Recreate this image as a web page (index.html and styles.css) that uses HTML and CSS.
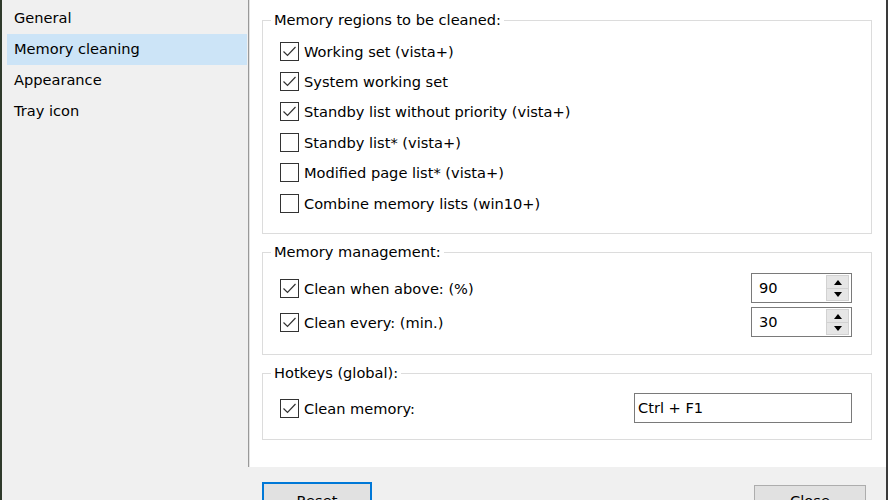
FILE: index.html
```html
<!DOCTYPE html>
<html lang="en">
<head>
  <meta charset="UTF-8" />
  <meta name="viewport" content="width=device-width, initial-scale=1.0"/>
  <title>Settings</title>
  <link rel="stylesheet" href="styles.css">
</head>
<body>
  <div class="screen">
    <div class="edge-left"></div>

    <div class="window">
      <div class="main">
        <ul class="nav">
          <li>General</li>
          <li class="active">Memory cleaning</li>
          <li>Appearance</li>
          <li>Tray icon</li>
        </ul>

        <div class="page">
          <fieldset class="group regions">
            <legend>Memory regions to be cleaned:</legend>
            <label class="check">
              <svg class="box" viewBox="0 0 19 19"><rect x="0.5" y="0.5" width="18" height="18"/><path d="M3.5 9.5l4 4 8-8.5"/></svg>
              Working set (vista+)
            </label>
            <label class="check">
              <svg class="box" viewBox="0 0 19 19"><rect x="0.5" y="0.5" width="18" height="18"/><path d="M3.5 9.5l4 4 8-8.5"/></svg>
              System working set
            </label>
            <label class="check">
              <svg class="box" viewBox="0 0 19 19"><rect x="0.5" y="0.5" width="18" height="18"/><path d="M3.5 9.5l4 4 8-8.5"/></svg>
              Standby list without priority (vista+)
            </label>
            <label class="check">
              <svg class="box" viewBox="0 0 19 19"><rect x="0.5" y="0.5" width="18" height="18"/></svg>
              Standby list* (vista+)
            </label>
            <label class="check">
              <svg class="box" viewBox="0 0 19 19"><rect x="0.5" y="0.5" width="18" height="18"/></svg>
              Modified page list* (vista+)
            </label>
            <label class="check">
              <svg class="box" viewBox="0 0 19 19"><rect x="0.5" y="0.5" width="18" height="18"/></svg>
              Combine memory lists (win10+)
            </label>
          </fieldset>

          <fieldset class="group manage">
            <legend>Memory management:</legend>
            <div class="row">
              <label class="check">
                <svg class="box" viewBox="0 0 19 19"><rect x="0.5" y="0.5" width="18" height="18"/><path d="M3.5 9.5l4 4 8-8.5"/></svg>
                Clean when above: (%)
              </label>
              <div class="spin">
                <span class="val">90</span>
                <div class="arrows">
                  <span class="arrow"><svg viewBox="0 0 8 5"><polygon points="0,5 4,0 8,5"/></svg></span>
                  <span class="arrow"><svg viewBox="0 0 8 5"><polygon points="0,0 8,0 4,5"/></svg></span>
                </div>
              </div>
            </div>
            <div class="row">
              <label class="check">
                <svg class="box" viewBox="0 0 19 19"><rect x="0.5" y="0.5" width="18" height="18"/><path d="M3.5 9.5l4 4 8-8.5"/></svg>
                Clean every: (min.)
              </label>
              <div class="spin">
                <span class="val">30</span>
                <div class="arrows">
                  <span class="arrow"><svg viewBox="0 0 8 5"><polygon points="0,5 4,0 8,5"/></svg></span>
                  <span class="arrow"><svg viewBox="0 0 8 5"><polygon points="0,0 8,0 4,5"/></svg></span>
                </div>
              </div>
            </div>
          </fieldset>

          <fieldset class="group hotkeys">
            <legend>Hotkeys (global):</legend>
            <div class="row">
              <label class="check">
                <svg class="box" viewBox="0 0 19 19"><rect x="0.5" y="0.5" width="18" height="18"/><path d="M3.5 9.5l4 4 8-8.5"/></svg>
                Clean memory:
              </label>
              <div class="field">Ctrl + F1</div>
            </div>
          </fieldset>
        </div>
      </div>

      <div class="buttons">
        <button class="btn default">Reset</button>
        <button class="btn close">Close</button>
      </div>
    </div>

    <div class="edge-right"></div>
  </div>
</body>
</html>
```

FILE: styles.css
```css
body {
  margin: 0;
  font-family: "DejaVu Sans", sans-serif;
  font-size: 14.6px;
  color: #000;
  background: #2e352c;
  overflow: hidden;
}
.screen {
  display: flex;
  height: 500px;
}
.edge-left {
  width: 2px;
  background: #2f3a2b;
}
.edge-right {
  width: 2px;
  background: #3a3a3a;
}
.window {
  flex: 1;
  display: flex;
  flex-direction: column;
  background: #f0f0f0;
}
.main {
  display: flex;
  height: 467px;
}

/* left navigation */
.nav {
  width: 240px;
  margin: 0;
  padding: 3px 1px 0 5px;
  list-style: none;
  background: #f0f0f0;
  border-right: 1px solid #999;
  box-shadow: 1px 0 0 #e3e3e3;
}
.nav li {
  height: 31px;
  line-height: 30px;
  padding-left: 7px;
}
.nav li.active {
  background: #cce4f7;
}

/* page content */
.page {
  flex: 1;
  background: #fff;
  margin-left: 1px;
  padding: 11px 14px 0 12px;
}
.group {
  margin: 0;
  border: 1px solid #dcdcdc;
  padding: 0 19px 0 17px;
}
.group legend {
  line-height: 18px;
  padding: 0 3px;
  margin-left: -9px;
}
.regions {
  padding-top: 7px;
  padding-bottom: 15px;
}
.manage {
  margin-top: 9px;
  padding-top: 12px;
  padding-bottom: 17px;
}
.hotkeys {
  margin-top: 9px;
  padding-top: 11px;
  padding-bottom: 16px;
}
.check {
  display: flex;
  align-items: center;
  gap: 5px;
  height: 30.4px;
}
.box {
  width: 19px;
  height: 19px;
  flex: none;
}
.box rect {
  fill: #fff;
  stroke: #333;
}
.box path {
  fill: none;
  stroke: #333;
  stroke-width: 1.2;
}
.row {
  display: flex;
  justify-content: space-between;
  align-items: center;
  height: 30px;
}
.row + .row {
  margin-top: 4px;
}
.row .check {
  height: 30px;
}

.spin {
  display: flex;
  width: 99px;
  height: 28px;
  border: 1px solid #7a7a7a;
}
.spin .val {
  flex: 1;
  padding-left: 7px;
  line-height: 28px;
}
.arrows {
  display: flex;
  flex-direction: column;
  width: 23px;
  margin: 1px 2px 1px 0;
}
.arrow {
  flex: 1;
  display: flex;
  align-items: center;
  justify-content: center;
  background: #e6e6e6;
  border: 1px solid #d2d2d2;
}
.arrow + .arrow {
  border-top: none;
}
.arrow svg {
  width: 8px;
  height: 5px;
  fill: #000;
}
.field {
  width: 213px;
  height: 28px;
  line-height: 28px;
  padding-left: 3px;
  border: 1px solid #7a7a7a;
}

/* bottom buttons */
.buttons {
  height: 33px;
  overflow: hidden;
  display: flex;
  justify-content: space-between;
  align-items: flex-start;
  padding: 15px 20px 0 260px;
  box-sizing: border-box;
}
.btn {
  font-family: inherit;
  font-size: 14.6px;
  color: #000;
  background: #e1e1e1;
  padding: 0;
}
.btn.default {
  width: 110px;
  height: 36px;
  border: 2px solid #0078d7;
}
.btn.close {
  width: 112px;
  height: 30px;
  margin-top: 3px;
  border: 1px solid #adadad;
}
```
